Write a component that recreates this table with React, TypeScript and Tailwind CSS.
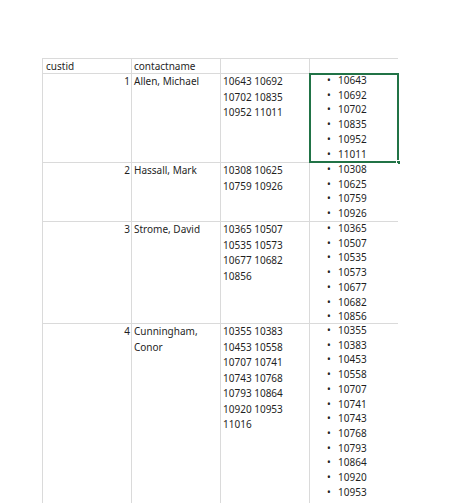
const rows = [
  { id: 1, name: ["Allen, Michael"], orders: [10643, 10692, 10702, 10835, 10952, 11011], h: "h-[88px]", list: "h-full" },
  { id: 2, name: ["Hassall, Mark"], orders: [10308, 10625, 10759, 10926], h: "h-[58px]", list: "h-full" },
  {
    id: 3,
    name: ["Strome, David"],
    orders: [10365, 10507, 10535, 10573, 10677, 10682, 10856],
    h: "h-[101px]",
    list: "h-full",
  },
  {
    id: 4,
    name: ["Cunningham,", "Conor"],
    orders: [10355, 10383, 10453, 10558, 10707, 10741, 10743, 10768, 10793, 10864, 10920, 10953, 11016],
    // the rest of this row runs below the window
    h: "h-[182px]",
    list: "h-[177px]",
  },
];

function pairs(list: number[]) {
  const out: string[] = [];
  for (let i = 0; i < list.length; i += 2) out.push(list.slice(i, i + 2).join(" "));
  return out;
}

export default function App() {
  return (
    <div className="h-[503px] overflow-hidden bg-white pl-[42px] pt-[58px] font-['Noto_Sans',sans-serif] text-[10px] text-[#1f1f1f]">
      <div className="grid w-[356px] grid-cols-[88px_88px_88px_88px] gap-px border border-[#dadada] bg-[#dadada]">
        <div className="h-[14px] bg-white pl-[3px] leading-[14px]">custid</div>
        <div className="h-[14px] bg-white pl-[2px] leading-[14px]">contactname</div>
        <div className="h-[14px] bg-white" />
        <div className="h-[14px] bg-white" />

        {rows.map((r) => (
          <div key={r.id} className="contents">
            <div className={`${r.h} bg-white pr-[1px] text-right leading-[15.5px]`}>{r.id}</div>
            <div className={`${r.h} bg-white pl-[2px] leading-[15.5px]`}>
              {r.name.map((n) => (
                <div key={n}>{n}</div>
              ))}
            </div>
            <div className={`${r.h} bg-white pl-[2px] leading-[15.5px]`}>
              {pairs(r.orders).map((p) => (
                <div key={p}>{p}</div>
              ))}
            </div>
            <div className={`${r.h} relative bg-white`}>
              <ul className={`${r.list} -mt-[1px] overflow-hidden leading-[14.7px]`}>
                {r.orders.map((o) => (
                  <li key={o} className="flex pl-[17px]">
                    <span className="w-[11px]">•</span>
                    <span>{o}</span>
                  </li>
                ))}
              </ul>
              {r.id === 1 && (
                <div className="absolute -inset-[1px] border-2 border-[#217346]">
                  <div className="absolute -bottom-[4px] -right-[4px] h-[5px] w-[5px] border border-white bg-[#217346]" />
                </div>
              )}
            </div>
          </div>
        ))}
      </div>
    </div>
  );
}
